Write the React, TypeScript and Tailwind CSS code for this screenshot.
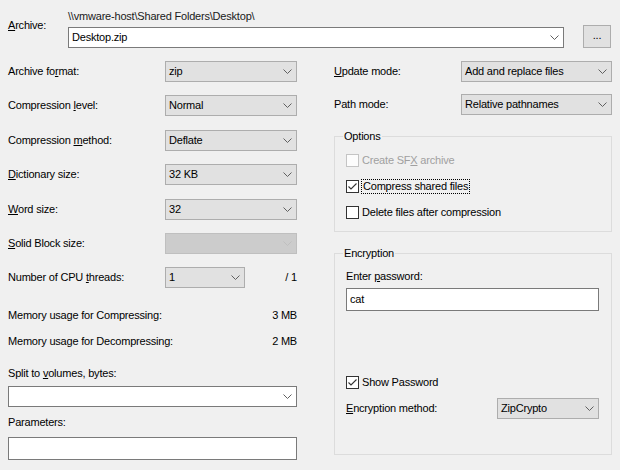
import React from "react";

function Chevron({ color }: { color: string }) {
  return (
    <svg width="9" height="5" viewBox="0 0 9 5" className="shrink-0">
      <path d="M0.5 0.5 L4.5 4.5 L8.5 0.5" fill="none" stroke={color} strokeWidth="1" />
    </svg>
  );
}

function Combo({
  value,
  className,
  disabled,
  white,
}: {
  value?: string;
  className: string;
  disabled?: boolean;
  white?: boolean;
}) {
  const look = disabled
    ? "bg-[#cccccc] border-[#bfbfbf]"
    : white
    ? "bg-white border-[#7a7a7a]"
    : "bg-[#e1e1e1] border-[#adadad]";
  return (
    <div className={`flex items-center justify-between border pl-[3px] pr-[4px] ${look} ${className}`}>
      <span className="leading-[13px]">{value}</span>
      <Chevron color={disabled ? "#bfbfbf" : "#606060"} />
    </div>
  );
}

function Check({ checked, disabled }: { checked?: boolean; disabled?: boolean }) {
  return (
    <div
      className={`w-[13px] h-[13px] shrink-0 border ${
        disabled ? "border-[#c4c4c4] bg-[#fcfcfc]" : "border-[#333333] bg-white"
      }`}
    >
      {checked && (
        <svg width="11" height="11" viewBox="0 0 11 11">
          <path d="M1.5 5.5 L4 8 L9.5 2.5" fill="none" stroke="#333333" strokeWidth="1.1" />
        </svg>
      )}
    </div>
  );
}

function Row({ children }: { children: React.ReactNode }) {
  return <div className="flex items-center h-[21px]">{children}</div>;
}

export default function App() {
  return (
    <div className="w-[620px] h-[470px] bg-[#f0f0f0] overflow-hidden text-[11px] tracking-[-0.2px] text-black font-['Liberation_Sans',Arial,sans-serif] leading-[13px]">
      {/* Archive row */}
      <div className="flex pt-[9px] pl-[8px]">
        <div className="w-[60px] pt-[10px]">
          <u>A</u>rchive:
        </div>
        <div className="flex flex-col w-[496px]">
          <div className="h-[14px] leading-[14px] text-[#1a1a1a]">\\vmware-host\Shared Folders\Desktop\</div>
          <Combo value="Desktop.zip" white className="mt-[4px] h-[21px] w-full" />
        </div>
        <div className="ml-[19px] mt-[16px] w-[28px] h-[23px] border border-[#adadad] bg-[#e1e1e1] flex items-center justify-center pb-[2px]">
          ...
        </div>
      </div>

      <div className="flex mt-[13px]">
        {/* Left column */}
        <div className="ml-[8px] w-[289px] flex flex-col">
          <div className="flex flex-col gap-[13.4px]">
            <Row>
              <div className="w-[157px]">Archive fo<u>r</u>mat:</div>
              <Combo value="zip" className="w-[132px] h-[21px]" />
            </Row>
            <Row>
              <div className="w-[157px]">Compression <u>l</u>evel:</div>
              <Combo value="Normal" className="w-[132px] h-[21px]" />
            </Row>
            <Row>
              <div className="w-[157px]">Compression <u>m</u>ethod:</div>
              <Combo value="Deflate" className="w-[132px] h-[21px]" />
            </Row>
            <Row>
              <div className="w-[157px]"><u>D</u>ictionary size:</div>
              <Combo value="32 KB" className="w-[132px] h-[21px]" />
            </Row>
            <Row>
              <div className="w-[157px]"><u>W</u>ord size:</div>
              <Combo value="32" className="w-[132px] h-[21px]" />
            </Row>
            <Row>
              <div className="w-[157px]"><u>S</u>olid Block size:</div>
              <Combo disabled className="w-[132px] h-[21px]" />
            </Row>
            <Row>
              <div className="w-[157px]">Number of CPU <u>t</u>hreads:</div>
              <Combo value="1" className="w-[80px] h-[21px]" />
              <div className="flex-1 text-right">/ 1</div>
            </Row>
          </div>
          <div className="flex justify-between h-[14px] mt-[21px]">
            <span>Memory usage for Compressing:</span>
            <span>3 MB</span>
          </div>
          <div className="flex justify-between h-[14px] mt-[12px]">
            <span>Memory usage for Decompressing:</span>
            <span>2 MB</span>
          </div>
          <div className="h-[14px] mt-[18px]">
            Split to <u>v</u>olumes, bytes:
          </div>
          <Combo white className="mt-[5px] h-[21px] w-full" />
          <div className="h-[14px] mt-[9px]">Parameters:</div>
          <div className="mt-[7px] h-[23px] w-full bg-white border border-[#7a7a7a]" />
        </div>

        {/* Right column */}
        <div className="ml-[37px] w-[278px] flex flex-col">
          <Row>
            <div className="w-[127px]"><u>U</u>pdate mode:</div>
            <Combo value="Add and replace files" className="w-[151px] h-[21px]" />
          </Row>
          <div className="flex items-center h-[21px] mt-[12px]">
            <div className="w-[127px]">Path mode:</div>
            <Combo value="Relative pathnames" className="w-[151px] h-[21px]" />
          </div>

          {/* Options */}
          <div className="relative mt-[21px] h-[96px] border border-[#dcdcdc] pt-[17px] pl-[11px]">
            <span className="absolute -top-[7px] left-[8px] px-[1px] bg-[#f0f0f0]">Options</span>
            <div className="flex flex-col gap-[13px]">
              <div className="flex items-center h-[13px]">
                <Check disabled />
                <span className="ml-[2px] px-[1px] text-[#a0a0a0]">
                  Create SF<u>X</u> archive
                </span>
              </div>
              <div className="flex items-center h-[13px]">
                <Check checked />
                <span className="ml-[2px] px-[1px] border border-dotted border-black h-[15px] leading-[13px]">
                  Compress shared files
                </span>
              </div>
              <div className="flex items-center h-[13px]">
                <Check />
                <span className="ml-[2px] px-[1px]">Delete files after compression</span>
              </div>
            </div>
          </div>

          {/* Encryption */}
          <div className="relative mt-[21px] h-[202px] border border-[#dcdcdc] pt-[16px] pl-[11px] flex flex-col">
            <span className="absolute -top-[7px] left-[8px] px-[1px] bg-[#f0f0f0]">Encryption</span>
            <div className="h-[13px]">
              Enter <u>p</u>assword:
            </div>
            <div className="mt-[5px] h-[23px] w-[253px] bg-white border border-[#7a7a7a] flex items-center pl-[3px]">
              cat
            </div>
            <div className="flex items-center h-[13px] mt-[65px]">
              <Check checked />
              <span className="ml-[3px]">Show Password</span>
            </div>
            <div className="flex items-center mt-[9px] h-[21px]">
              <div className="w-[151px]"><u>E</u>ncryption method:</div>
              <Combo value="ZipCrypto" className="w-[102px] h-[21px]" />
            </div>
          </div>
        </div>
      </div>
    </div>
  );
}
